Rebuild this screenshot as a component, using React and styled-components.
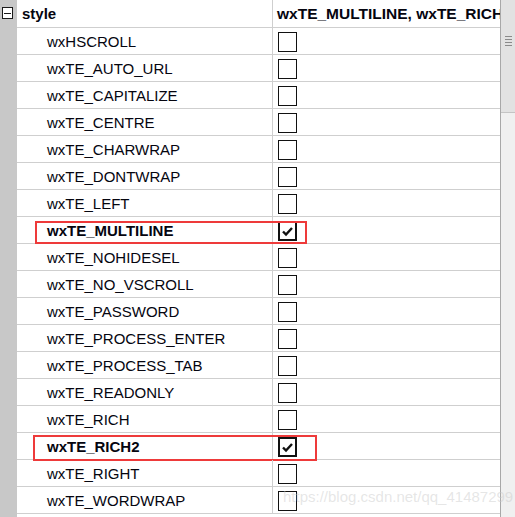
import React from 'react';
import styled, { createGlobalStyle } from 'styled-components';

const GlobalStyle = createGlobalStyle`
  html, body {
    margin: 0;
    padding: 0;
    background: #ffffff;
    overflow: hidden;
  }
  body {
    font-family: "Liberation Sans", Arial, sans-serif;
  }
`;

const Frame = styled.div`
  width: 515px;
  height: 517px;
  display: flex;
  position: relative;
  overflow: hidden;
  background: #ffffff;
`;

const Gutter = styled.div`
  width: 17px;
  flex: none;
  background: #c8c8c8;
  position: relative;
`;

const Toggle = styled.div`
  position: absolute;
  left: 2px;
  top: 7px;
  width: 9px;
  height: 10px;
  border: 1px solid #1a1a1a;
  background: #ffffff;
  display: flex;
  align-items: center;
  justify-content: center;

  &::after {
    content: "";
    width: 7px;
    height: 1px;
    background: #1a1a1a;
  }
`;

const Table = styled.div`
  flex: 1;
  display: flex;
  flex-direction: column;
  min-width: 0;
`;

const Row = styled.div`
  display: flex;
  height: ${p => (p.$header ? 27 : 26)}px;
  border-bottom: 1px solid #cfcfcf;
  flex: none;
  position: relative;
`;

const NameCell = styled.div`
  width: 256px;
  flex: none;
  display: flex;
  align-items: center;
  padding-left: ${p => (p.$header ? 5 : 30)}px;
  padding-top: ${p => (p.$header ? 0 : 0)}px;
  box-sizing: border-box;
  border-right: 1px solid #cfcfcf;
  font-size: 15px;
  font-weight: ${p => (p.$bold ? 700 : 400)};
  color: #05050f;
  white-space: nowrap;
`;

const ValueCell = styled.div`
  flex: 1;
  display: flex;
  align-items: center;
  padding-left: 4px;
  overflow: hidden;
  font-size: 15.5px;
  font-weight: 700;
  color: #05050f;
  white-space: nowrap;
  text-overflow: clip;
`;

const Box = styled.div`
  width: 19px;
  height: 20px;
  box-sizing: border-box;
  border: ${p => (p.$checked ? 2 : 1)}px solid #111111;
  background: #ffffff;
  display: flex;
  align-items: center;
  justify-content: center;
  margin-top: 2px;
  margin-left: 1px;
`;

const Highlight = styled.div`
  position: absolute;
  left: ${p => p.$left}px;
  top: ${p => p.$top}px;
  width: ${p => p.$width}px;
  height: ${p => p.$height}px;
  border: 2px solid #ee3a3a;
  box-sizing: border-box;
  pointer-events: none;
`;

const Scrollbar = styled.div`
  width: 14px;
  flex: none;
  background: #f0f0f0;
  border-left: 1px solid #a8a8a8;
  display: flex;
  flex-direction: column;
`;

const Thumb = styled.div`
  height: 113px;
  background: #e2e2e2;
  border-bottom: 1px solid #c4c4c4;
  display: flex;
  flex-direction: column;
  align-items: center;
  justify-content: flex-start;
  padding-top: 36px;
  box-sizing: border-box;
  gap: 2px;
`;

const Grip = styled.span`
  width: 7px;
  height: 1px;
  background: #8a8a8a;
`;

const Watermark = styled.div`
  position: absolute;
  left: 283px;
  top: 488px;
  font-family: "Liberation Sans", Arial, sans-serif;
  font-size: 15px;
  color: rgba(200, 200, 200, 0.45);
  white-space: nowrap;
  pointer-events: none;
`;

const Check = () => (
  <svg width="13" height="11" viewBox="0 0 13 11">
    <path d="M2 5.5 L5 8.5 L11 2" fill="none" stroke="#111" strokeWidth="2.4" />
  </svg>
);

const styles = [
  { name: 'wxHSCROLL' },
  { name: 'wxTE_AUTO_URL' },
  { name: 'wxTE_CAPITALIZE' },
  { name: 'wxTE_CENTRE' },
  { name: 'wxTE_CHARWRAP' },
  { name: 'wxTE_DONTWRAP' },
  { name: 'wxTE_LEFT' },
  { name: 'wxTE_MULTILINE', on: true, mark: { left: 18, top: 4, width: 272, height: 23 } },
  { name: 'wxTE_NOHIDESEL' },
  { name: 'wxTE_NO_VSCROLL' },
  { name: 'wxTE_PASSWORD' },
  { name: 'wxTE_PROCESS_ENTER' },
  { name: 'wxTE_PROCESS_TAB' },
  { name: 'wxTE_READONLY' },
  { name: 'wxTE_RICH' },
  { name: 'wxTE_RICH2', on: true, mark: { left: 16, top: 2, width: 284, height: 26 } },
  { name: 'wxTE_RIGHT' },
  { name: 'wxTE_WORDWRAP' },
];

export default function App() {
  return (
    <>
      <GlobalStyle />
      <Frame>
        <Gutter>
          <Toggle />
        </Gutter>
        <Table>
          <Row $header>
            <NameCell $header $bold>style</NameCell>
            <ValueCell>wxTE_MULTILINE, wxTE_RICH2</ValueCell>
          </Row>
          {styles.map(s => (
            <Row key={s.name}>
              <NameCell $bold={s.on}>{s.name}</NameCell>
              <ValueCell>
                <Box $checked={s.on}>{s.on && <Check />}</Box>
              </ValueCell>
              {s.mark && (
                <Highlight
                  $left={s.mark.left}
                  $top={s.mark.top}
                  $width={s.mark.width}
                  $height={s.mark.height}
                />
              )}
            </Row>
          ))}
        </Table>
        <Scrollbar>
          <Thumb>
            <Grip />
            <Grip />
            <Grip />
            <Grip />
          </Thumb>
        </Scrollbar>
        <Watermark>https://blog.csdn.net/qq_41487299</Watermark>
      </Frame>
    </>
  );
}
